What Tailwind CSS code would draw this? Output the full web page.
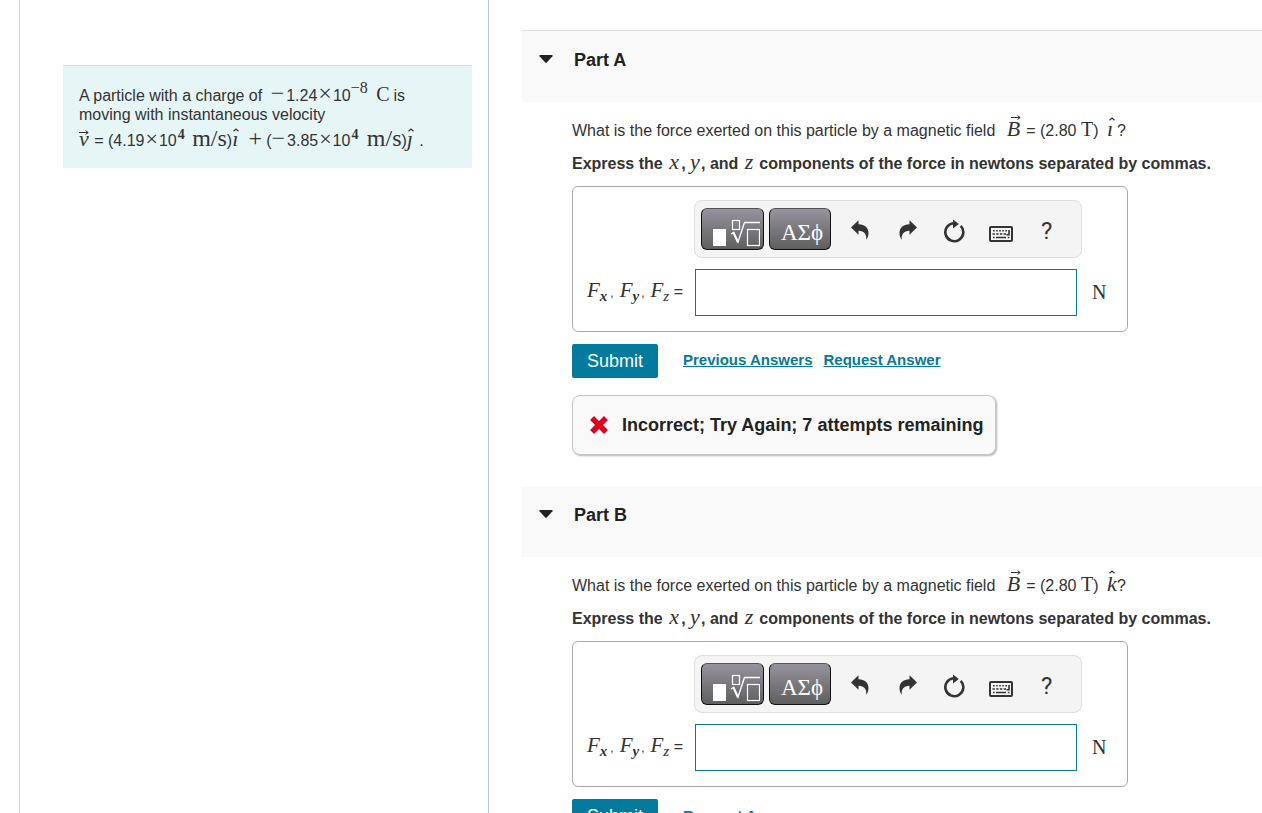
<!DOCTYPE html>
<html lang="en">
<head>
<meta charset="utf-8">
<meta name="viewport" content="width=device-width, initial-scale=1">
<title>Force on a moving charge</title>
<script src="https://cdn.jsdelivr.net/npm/@tailwindcss/browser@4"></script>
</head>
<body class="bg-white font-['Liberation_Sans',Arial,sans-serif] text-base text-[#333]">

<!-- Shared symbols -->
<svg class="hidden" aria-hidden="true">
  <symbol id="vec" viewBox="0 0 10 5"><path d="M0 2.500H9M6.500 .5 9.200 2.500 6.500 4.500" fill="none" stroke="#333" stroke-width="1"/></symbol>
  <symbol id="hat" viewBox="0 0 6 4"><path d="M.5 3.200 3 1 5.500 3.200" fill="none" stroke="#333" stroke-width="1.200"/></symbol>
  <symbol id="root" viewBox="0 0 48 28">
    <rect x="1" y="10" width="13" height="17" fill="#fff"/>
    <rect x="20.500" y="1.500" width="7" height="9" fill="none" stroke="#fff" stroke-width="1.200"/>
    <path d="M19 15 21.500 13.500l4.500 9.500L32.500 3.500H48" fill="none" stroke="#fff" stroke-width="1.300"/>
    <path d="M21.500 13.500 26 23.500" stroke="#fff" stroke-width="2"/>
    <rect x="35.500" y="10.500" width="12" height="16" fill="none" stroke="#fff" stroke-width="1.200"/>
  </symbol>
  <symbol id="undo" viewBox="0 0 18 20"><path d="M0 7.500 7.500.3v4C14 4.500 17.500 8 17.500 13c0 2.500-.7 4.700-2.200 6.700C15.600 14 13.500 11 7.500 10.800v4z" fill="#333"/></symbol>
  <symbol id="reset" viewBox="0 0 22 24"><path d="M17.700 6.800A9 9 0 1 1 10.500 4.200" fill="none" stroke="#333" stroke-width="2.600"/><path d="M10 .5 15.800 5 10 9.500z" fill="#333"/></symbol>
  <symbol id="keyboard" viewBox="0 0 24 16">
    <rect x="1" y="1" width="22" height="14" rx="1" fill="none" stroke="#333" stroke-width="2"/>
    <path d="M4 4.800h14" stroke="#333" stroke-width="1.600" stroke-dasharray="1.600 1.500"/>
    <path d="M3.500 8h14" stroke="#333" stroke-width="1.600" stroke-dasharray="2.400 1.300"/>
    <path d="M20 4v4.800h-2.500M7 11.500h10" fill="none" stroke="#333" stroke-width="1.600"/>
    <path d="M4 11.500h1.600M18.800 11.500h1.600" stroke="#333" stroke-width="1.600"/>
  </symbol>
</svg>

<div class="flex h-screen overflow-hidden">
  <aside class="ml-[19px] w-[470px] shrink-0 border-l border-r border-l-[#d4d4d4] border-r-[#b4c9d6] pt-[65px] pr-4 pl-[43px]">
    <div class="border-t border-[#d9dfdf] bg-[#e6f6f6] px-4 pt-5 pb-4 whitespace-nowrap">
      <p class="h-[19px] leading-[19px]">A particle with a charge of <span class="mr-0.5 ml-1 font-['Liberation_Serif',serif] text-2xl leading-0">−</span>1.24<span class="mx-px font-['Liberation_Serif',serif] text-2xl leading-0">×</span>10<sup class="font-['Liberation_Serif',serif] text-base leading-0">−8</sup> <span class="mr-1 ml-1 font-['Liberation_Serif',serif] text-xl leading-0">C</span>is</p>
      <p class="h-[19px] leading-[19px]">moving with instantaneous velocity</p>
      <p class="h-7 pt-1 leading-6"><span class="relative mr-px inline-block font-['Liberation_Serif',serif] text-[22px] leading-none italic">v<svg class="absolute top-0.5 left-0 h-[5px] w-2.5"><use href="#vec"/></svg></span> = (4.19<span class="mx-px font-['Liberation_Serif',serif] text-[22px] leading-0">×</span>10<sup class="ml-px font-['Liberation_Serif',serif] text-sm leading-0 font-bold">4</sup> <span class="ml-[3px] font-['Liberation_Serif',serif] text-2xl leading-0">m/s</span>)<span class="relative mr-1 inline-block w-2 font-['Liberation_Serif',serif] text-[22px] leading-none italic">ı<svg class="absolute top-0 left-px h-1 w-1.5"><use href="#hat"/></svg></span> <span class="mr-1 font-['Liberation_Serif',serif] text-2xl leading-0">+</span>(<span class="mr-0.5 font-['Liberation_Serif',serif] text-2xl leading-0">−</span>3.85<span class="mx-px font-['Liberation_Serif',serif] text-[22px] leading-0">×</span>10<sup class="ml-px font-['Liberation_Serif',serif] text-sm leading-0 font-bold">4</sup> <span class="ml-1 font-['Liberation_Serif',serif] text-2xl leading-0">m/s</span>)<span class="relative inline-block w-2 font-['Liberation_Serif',serif] text-[22px] leading-none italic">ȷ<svg class="absolute top-0 left-px h-1 w-1.5"><use href="#hat"/></svg></span> .</p>
    </div>
  </aside>

  <main class="ml-[33px] min-w-0 flex-1 pt-[30px]">
    <section class="mb-8">
      <header class="flex h-[72px] items-start border-t border-[#dcdcdc] bg-[#f9f9f9] pt-4 pl-4">
        <button class="mt-2 mr-[21px] flex w-[15px] justify-center" aria-label="Collapse Part A"><svg class="h-2 w-3.5" viewBox="0 0 14 8"><path d="M1 0h12q1 .5.500 1.300L8 7.200q-1 1-2 0L.5 1.300Q0 .5 1 0z" fill="#222"/></svg></button>
        <h2 class="text-lg leading-[26px] font-bold text-[#222]">Part A</h2>
      </header>
      <div class="pt-4 pl-[50px]">
        <p class="h-6 leading-6 whitespace-nowrap">What is the force exerted on this particle by a magnetic field <span class="relative ml-[7px] inline-block w-[15px] font-['Liberation_Serif',serif] text-[22px] leading-none italic">B<svg class="absolute -top-[3px] left-1 h-[5px] w-2.5"><use href="#vec"/></svg></span> = (2.80 <span class="font-['Liberation_Serif',serif] text-xl leading-0">T</span>) <span class="relative ml-1 inline-block w-2.5 font-['Liberation_Serif',serif] text-[22px] leading-none italic">ı<svg class="absolute -top-px left-0.5 h-1 w-1.5"><use href="#hat"/></svg></span>?</p>
        <p class="mt-2.5 h-6 leading-6 font-bold whitespace-nowrap">Express the <span class="ml-0.5 inline-block w-3 font-['Liberation_Serif',serif] text-[22px] leading-0 font-normal italic">x</span>, <span class="inline-block w-[11px] font-['Liberation_Serif',serif] text-[22px] leading-0 font-normal italic">y</span>, and <span class="ml-0.5 inline-block w-2.5 font-['Liberation_Serif',serif] text-[22px] leading-0 font-normal italic">z</span> components of the force in newtons separated by commas.</p>
        <div class="mt-2.5 grid max-w-[556px] grid-cols-[121px_minmax(0,1fr)_45px] items-center gap-y-[11px] rounded-md border border-[#a9a9a9] pt-[13px] pb-[15px]">
          <div class="col-start-2 flex h-[58px] items-center rounded-lg border border-[#ddd] bg-[#f4f4f4] pl-1.5">
            <button class="flex h-[42px] w-[63px] items-start rounded-md border border-[#111] border-t-[#555] bg-linear-to-b from-[#97939e] to-[#5f5f5f] pt-2.5 pl-2.5" aria-label="Templates"><svg class="h-7 w-12"><use href="#root"/></svg></button>
            <button class="ml-[5px] h-[42px] w-[62px] rounded-md border border-[#111] border-t-[#555] bg-linear-to-b from-[#97939e] to-[#5f5f5f] pt-1.5 pl-1 font-['Liberation_Serif',serif] text-[23px] leading-none text-white">ΑΣϕ</button>
            <button class="ml-5 pt-0.5" aria-label="Undo"><svg class="h-5 w-[18px]"><use href="#undo"/></svg></button>
            <button class="ml-[30px] pt-0.5" aria-label="Redo"><svg class="h-5 w-[18px] -scale-x-100"><use href="#undo"/></svg></button>
            <button class="ml-[26px] pt-1" aria-label="Reset"><svg class="h-6 w-[22px]"><use href="#reset"/></svg></button>
            <button class="ml-6 pt-2.5" aria-label="Keyboard shortcuts"><svg class="h-4 w-6"><use href="#keyboard"/></svg></button>
            <button class="ml-7 pt-1 font-[Roboto,sans-serif] text-2xl leading-none" aria-label="Help">?</button>
          </div>
          <label for="answer-a" class="col-start-1 pb-1 pl-3.5 whitespace-nowrap"><span class="font-['Liberation_Serif',serif] text-[21px] italic">F<sub class="text-[15px] font-bold">x</sub></span><span class="mr-1.5 ml-[3px] text-xs">,</span><span class="font-['Liberation_Serif',serif] text-[21px] italic">F<sub class="text-[15px] font-bold">y</sub></span><span class="mr-1.5 ml-0.5 text-xs">,</span><span class="font-['Liberation_Serif',serif] text-[21px] italic">F<sub class="text-[15px]">z</sub></span> =</label>
          <input id="answer-a" type="text" class="mr-[5px] ml-px h-[47px] border border-[#047a9c] bg-white px-2 outline-none">
          <span class="pb-0.5 pl-2.5 font-['Liberation_Serif',serif] text-xl">N</span>
        </div>
        <div class="mt-3 flex h-[34px] items-center">
          <button class="h-[34px] w-[86px] rounded-xs bg-[#047a9c] text-lg text-white">Submit</button>
          <a href="#" class="ml-[25px] pb-0.5 text-[15px] leading-5 font-bold text-[#047a9c] underline">Previous Answers</a>
          <a href="#" class="ml-[11px] pb-0.5 text-[15px] leading-5 font-bold text-[#047a9c] underline">Request Answer</a>
        </div>
        <div role="status" class="mt-[17px] flex h-[60px] w-fit items-center rounded-lg border border-[#c7c7c7] bg-[#f9f9f9] pr-3 pl-[17px] shadow-[1px_1px_2px_rgba(0,0,0,0.3)]">
          <svg class="h-[18px] w-[18px]" viewBox="0 0 18 18" aria-hidden="true"><path d="M4 4 14 14M14 4 4 14" stroke="#db0020" stroke-width="5.500" stroke-linecap="square"/></svg>
          <span class="ml-3.5 text-lg font-bold text-[#222]">Incorrect; Try Again; 7 attempts remaining</span>
        </div>
      </div>
    </section>

    <section>
      <header class="flex h-[70px] items-start bg-[#f9f9f9] pt-[15px] pl-4">
        <button class="mt-2 mr-[21px] flex w-[15px] justify-center" aria-label="Collapse Part B"><svg class="h-2 w-3.5" viewBox="0 0 14 8"><path d="M1 0h12q1 .5.500 1.300L8 7.200q-1 1-2 0L.5 1.300Q0 .5 1 0z" fill="#222"/></svg></button>
        <h2 class="text-lg leading-[26px] font-bold text-[#222]">Part B</h2>
      </header>
      <div class="pt-4 pl-[50px]">
        <p class="h-6 leading-6 whitespace-nowrap">What is the force exerted on this particle by a magnetic field <span class="relative ml-[7px] inline-block w-[15px] font-['Liberation_Serif',serif] text-[22px] leading-none italic">B<svg class="absolute -top-[3px] left-1 h-[5px] w-2.5"><use href="#vec"/></svg></span> = (2.80 <span class="font-['Liberation_Serif',serif] text-xl leading-0">T</span>) <span class="relative ml-1 inline-block w-2.5 font-['Liberation_Serif',serif] text-[22px] leading-none italic">k<svg class="absolute -top-[3px] left-0.5 h-1 w-1.5"><use href="#hat"/></svg></span>?</p>
        <p class="mt-2.5 h-6 leading-6 font-bold whitespace-nowrap">Express the <span class="ml-0.5 inline-block w-3 font-['Liberation_Serif',serif] text-[22px] leading-0 font-normal italic">x</span>, <span class="inline-block w-[11px] font-['Liberation_Serif',serif] text-[22px] leading-0 font-normal italic">y</span>, and <span class="ml-0.5 inline-block w-2.5 font-['Liberation_Serif',serif] text-[22px] leading-0 font-normal italic">z</span> components of the force in newtons separated by commas.</p>
        <div class="mt-2.5 grid max-w-[556px] grid-cols-[121px_minmax(0,1fr)_45px] items-center gap-y-[11px] rounded-md border border-[#a9a9a9] pt-[13px] pb-[15px]">
          <div class="col-start-2 flex h-[58px] items-center rounded-lg border border-[#ddd] bg-[#f4f4f4] pl-1.5">
            <button class="flex h-[42px] w-[63px] items-start rounded-md border border-[#111] border-t-[#555] bg-linear-to-b from-[#97939e] to-[#5f5f5f] pt-2.5 pl-2.5" aria-label="Templates"><svg class="h-7 w-12"><use href="#root"/></svg></button>
            <button class="ml-[5px] h-[42px] w-[62px] rounded-md border border-[#111] border-t-[#555] bg-linear-to-b from-[#97939e] to-[#5f5f5f] pt-1.5 pl-1 font-['Liberation_Serif',serif] text-[23px] leading-none text-white">ΑΣϕ</button>
            <button class="ml-5 pt-0.5" aria-label="Undo"><svg class="h-5 w-[18px]"><use href="#undo"/></svg></button>
            <button class="ml-[30px] pt-0.5" aria-label="Redo"><svg class="h-5 w-[18px] -scale-x-100"><use href="#undo"/></svg></button>
            <button class="ml-[26px] pt-1" aria-label="Reset"><svg class="h-6 w-[22px]"><use href="#reset"/></svg></button>
            <button class="ml-6 pt-2.5" aria-label="Keyboard shortcuts"><svg class="h-4 w-6"><use href="#keyboard"/></svg></button>
            <button class="ml-7 pt-1 font-[Roboto,sans-serif] text-2xl leading-none" aria-label="Help">?</button>
          </div>
          <label for="answer-b" class="col-start-1 pb-1 pl-3.5 whitespace-nowrap"><span class="font-['Liberation_Serif',serif] text-[21px] italic">F<sub class="text-[15px] font-bold">x</sub></span><span class="mr-1.5 ml-[3px] text-xs">,</span><span class="font-['Liberation_Serif',serif] text-[21px] italic">F<sub class="text-[15px] font-bold">y</sub></span><span class="mr-1.5 ml-0.5 text-xs">,</span><span class="font-['Liberation_Serif',serif] text-[21px] italic">F<sub class="text-[15px]">z</sub></span> =</label>
          <input id="answer-b" type="text" class="mr-[5px] ml-px h-[47px] border border-[#047a9c] bg-white px-2 outline-none">
          <span class="pb-0.5 pl-2.5 font-['Liberation_Serif',serif] text-xl">N</span>
        </div>
        <div class="mt-3 flex h-[34px] items-center">
          <button class="h-[34px] w-[86px] rounded-xs bg-[#047a9c] text-lg text-white">Submit</button>
          <a href="#" class="ml-[25px] text-[15px] leading-5 font-bold text-[#047a9c] underline">Request Answer</a>
        </div>
      </div>
    </section>
  </main>
</div>
</body>
</html>
